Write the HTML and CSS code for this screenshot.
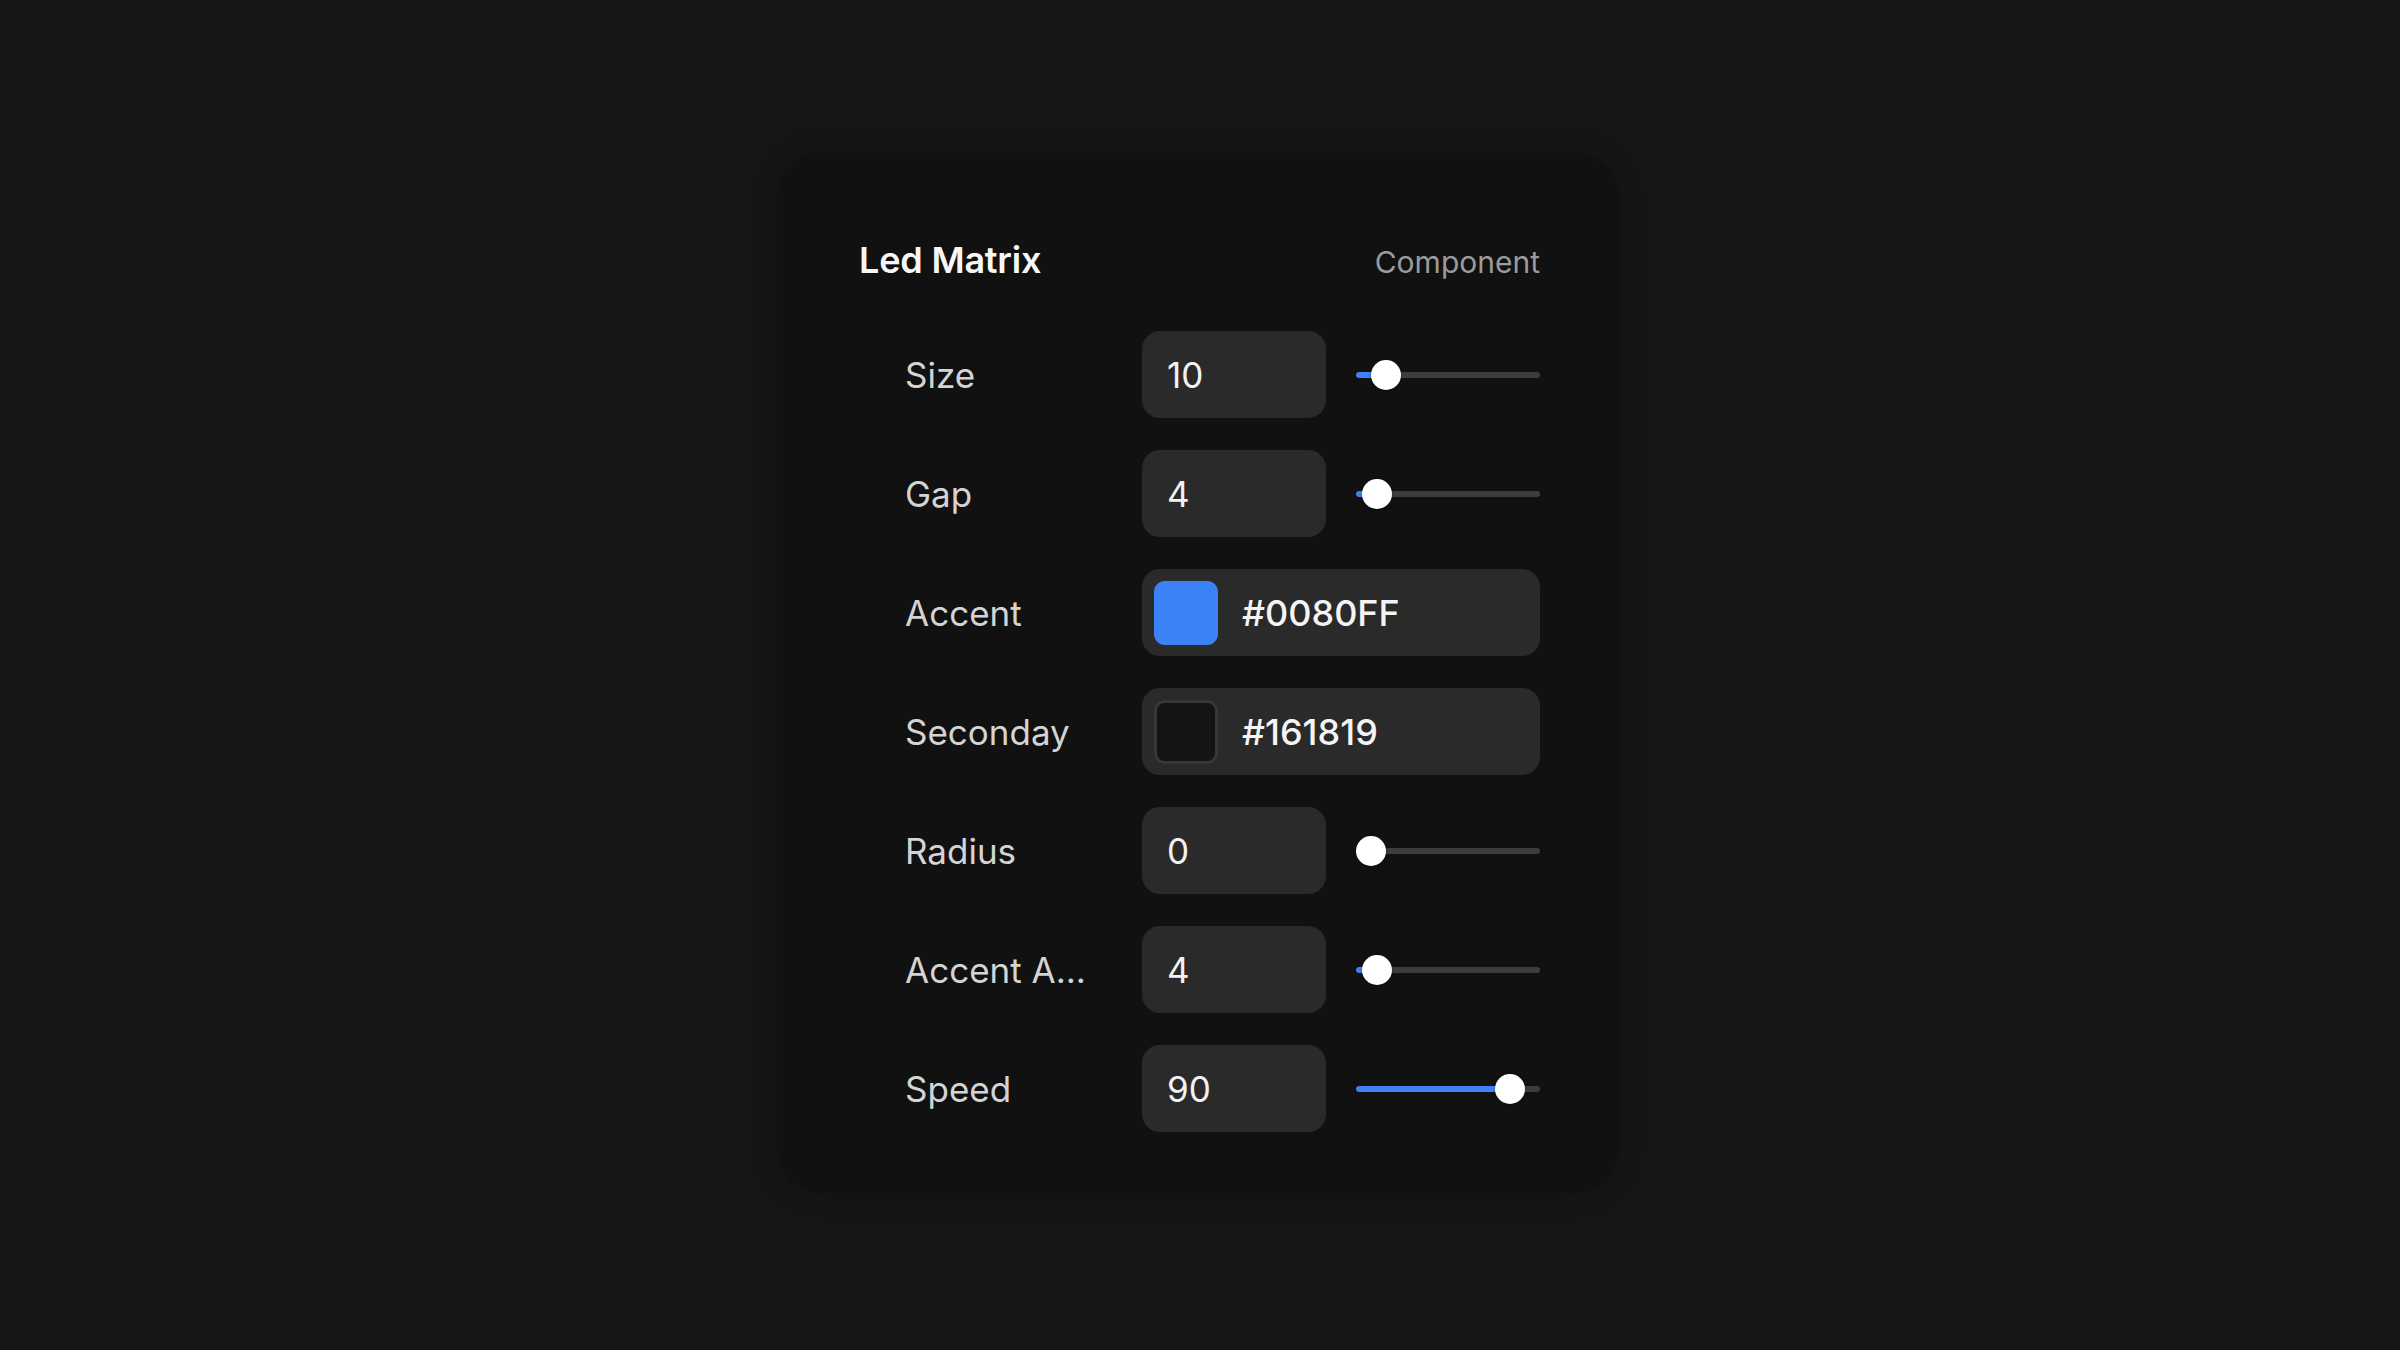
FILE: index.html
```html
<!DOCTYPE html>
<html lang="en">
<head>
<meta charset="utf-8">
<title>Led Matrix</title>
<link rel="stylesheet" href="styles.css">
</head>
<body>
<main class="stage">
  <section class="panel">
    <header class="panel-head">
      <h1 class="title">Led Matrix</h1>
      <span class="kind">Component</span>
    </header>
    <div class="rows">
      <div class="row">
        <span class="label">Size</span>
        <div class="field">10</div>
        <div class="slider">
          <div class="track"><div class="fill" style="width:30.4px"></div></div>
          <div class="thumb" style="left:15.4px"></div>
        </div>
      </div>
      <div class="row">
        <span class="label">Gap</span>
        <div class="field">4</div>
        <div class="slider">
          <div class="track"><div class="fill" style="width:21.2px"></div></div>
          <div class="thumb" style="left:6.2px"></div>
        </div>
      </div>
      <div class="row">
        <span class="label">Accent</span>
        <div class="field color-field">
          <span class="swatch swatch-accent"></span>
          <span class="hex">#0080FF</span>
        </div>
      </div>
      <div class="row">
        <span class="label">Seconday</span>
        <div class="field color-field">
          <span class="swatch swatch-secondary"></span>
          <span class="hex">#161819</span>
        </div>
      </div>
      <div class="row">
        <span class="label">Radius</span>
        <div class="field">0</div>
        <div class="slider">
          <div class="track"><div class="fill" style="width:0px"></div></div>
          <div class="thumb" style="left:0px"></div>
        </div>
      </div>
      <div class="row">
        <span class="label">Accent A...</span>
        <div class="field">4</div>
        <div class="slider">
          <div class="track"><div class="fill" style="width:21.2px"></div></div>
          <div class="thumb" style="left:6.2px"></div>
        </div>
      </div>
      <div class="row">
        <span class="label">Speed</span>
        <div class="field">90</div>
        <div class="slider">
          <div class="track"><div class="fill" style="width:153.6px"></div></div>
          <div class="thumb" style="left:138.6px"></div>
        </div>
      </div>
    </div>
  </section>
</main>
</body>
</html>
```

FILE: styles.css
```css
* { box-sizing: border-box; }

html, body {
  margin: 0;
  padding: 0;
  height: 100%;
}

body {
  background: #151618;
  font-family: Inter, "Noto Sans", "Liberation Sans", sans-serif;
  color: #e8e8e8;
}

.stage {
  height: 100%;
  display: flex;
  align-items: flex-start;
  justify-content: center;
  padding-top: 153px;
}

.panel {
  width: 840px;
  margin-left: -4px;
  background: #111111;
  border-radius: 44px;
  padding: 77px 78px 61px 81px;
  box-shadow: 0 0 30px rgba(0, 0, 0, 0.25);
}

.panel-head {
  height: 60px;
  display: flex;
  align-items: center;
  justify-content: space-between;
  margin-bottom: 41px;
}

.title {
  margin: 0;
  font-size: 36px;
  font-weight: 600;
  color: #f7f7f7;
  letter-spacing: -0.2px;
}

.kind {
  font-size: 30px;
  font-weight: 400;
  color: #9b9b9b;
  margin-top: 3px;
}

.rows {
  display: flex;
  flex-direction: column;
  gap: 32px;
}

.row {
  display: grid;
  grid-template-columns: 253px 184px 184px;
  column-gap: 30px;
  align-items: center;
  height: 87px;
}

.label {
  padding-left: 46px;
  font-size: 35px;
  color: #d4d4d4;
  white-space: nowrap;
}

.field {
  height: 87px;
  background: #2a2a2a;
  border-radius: 18px;
  display: flex;
  align-items: center;
  padding-left: 25px;
  font-size: 35px;
  color: #f2f2f2;
}

.color-field {
  grid-column: 2 / span 2;
  padding-left: 12px;
  gap: 24px;
}

.swatch {
  width: 64px;
  height: 64px;
  border-radius: 11px;
  flex: none;
}

.swatch-accent {
  background: #3b82f6;
}

.swatch-secondary {
  background: #121416;
  border: 3px solid #373737;
}

.hex {
  font-size: 36px;
  font-weight: 500;
  color: #f4f4f4;
}

.slider {
  position: relative;
  height: 30px;
  display: flex;
  align-items: center;
}

.track {
  width: 100%;
  height: 6px;
  border-radius: 3px;
  background: #3d3d3d;
  overflow: hidden;
}

.fill {
  height: 100%;
  background: #3b82f6;
  border-radius: 3px;
}

.thumb {
  position: absolute;
  top: 0;
  width: 30px;
  height: 30px;
  border-radius: 50%;
  background: #ffffff;
  box-shadow: 0 1px 3px rgba(0, 0, 0, 0.35);
}
```
